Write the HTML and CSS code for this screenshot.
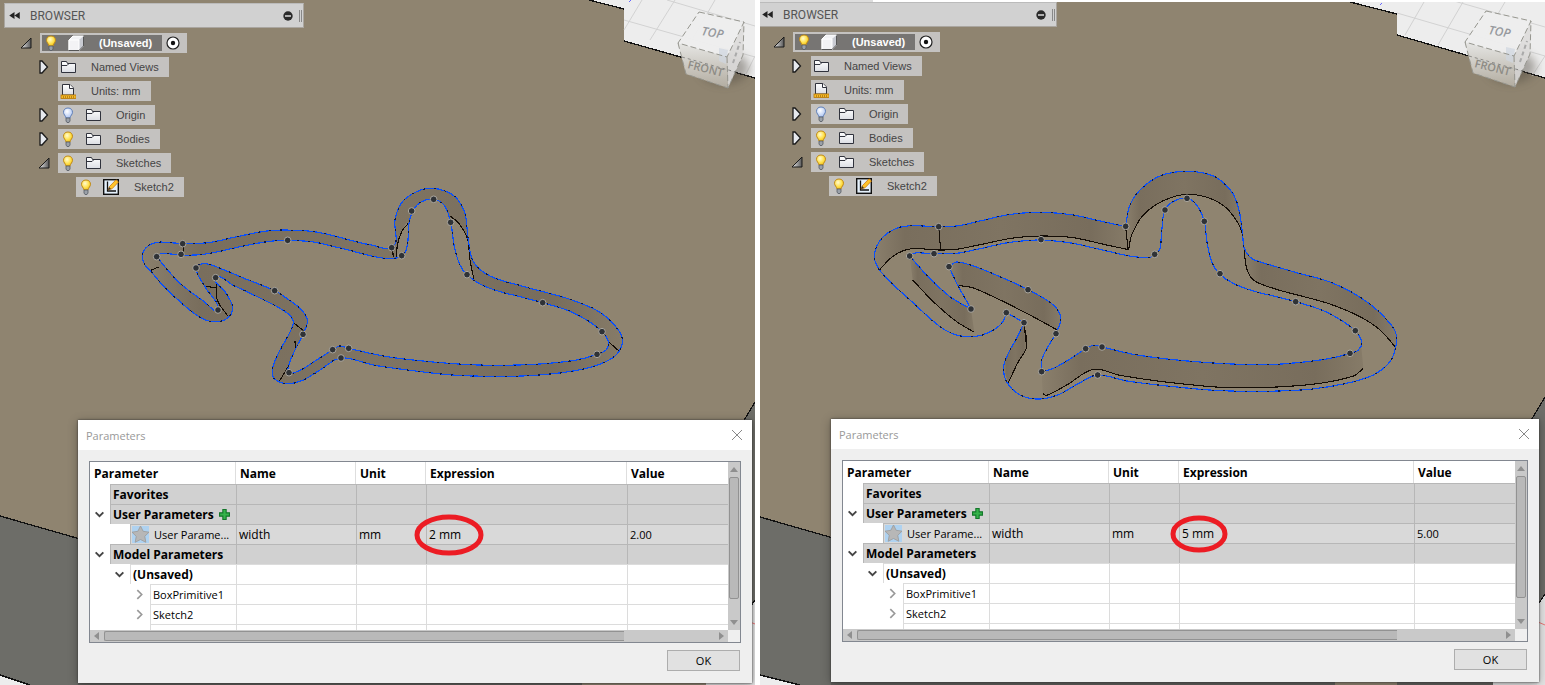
FILE: index.html
```html
<!DOCTYPE html>
<html lang="en">
<head>
<meta charset="utf-8">
<title>Parameters comparison</title>
<link rel="stylesheet" href="styles.css">
</head>
<body>
<svg class="defs" aria-hidden="true">
  <defs>
    <linearGradient id="wall" x1="0" x2="1" y1="0" y2="0">
      <stop offset="0" stop-color="#8a7f6c"/><stop offset=".12" stop-color="#796e5d"/>
      <stop offset=".5" stop-color="#7f7462"/><stop offset=".85" stop-color="#786d5c"/><stop offset="1" stop-color="#867b68"/>
    </linearGradient>
    <linearGradient id="metal" x1="0" x2="1" y1="0" y2="0"><stop offset="0" stop-color="#eee"/><stop offset="1" stop-color="#555"/></linearGradient>
    <linearGradient id="paper" x1="0" x2="0" y1="0" y2="1"><stop offset="0" stop-color="#fff"/><stop offset="1" stop-color="#dcdee4"/></linearGradient>
    <radialGradient id="glow" cx=".4" cy=".35" r=".7"><stop offset="0" stop-color="#fffbd0"/><stop offset=".6" stop-color="#ffe04a"/><stop offset="1" stop-color="#f0b810"/></radialGradient>
    <radialGradient id="dim" cx=".4" cy=".35" r=".7"><stop offset="0" stop-color="#fff"/><stop offset="1" stop-color="#a9c2f2"/></radialGradient>
    <linearGradient id="cubeFace" x1="0" x2="0" y1="0" y2="1"><stop offset="0" stop-color="#e6e6e4"/><stop offset="1" stop-color="#b2aca0"/></linearGradient>
    <filter id="soft" x="-50%" y="-50%" width="200%" height="200%"><feGaussianBlur stdDeviation="5"/></filter>
    <symbol id="i-open" viewBox="0 0 12 12"><path d="M11 1V11H1Z" fill="url(#metal)" stroke="#1a1a1a"/></symbol>
    <symbol id="i-closed" viewBox="0 0 12 14"><path d="M2 1H4L9.500 7L4 13H2Z" fill="#e6e9ee" stroke="#1a1a1a" stroke-width="1.300"/></symbol>
    <symbol id="i-bulb" viewBox="0 0 16 16"><path d="M8 1C5 1 3.500 3 3.500 5.300C3.500 7.500 5.500 8.500 6 11H10C10.500 8.500 12.500 7.500 12.500 5.300C12.500 3 11 1 8 1Z" fill="url(#glow)" stroke="#c08a18"/><path d="M6 11H10V14L9 15.500H7L6 14Z" fill="#9aa0a8" stroke="#565b63" stroke-width=".8"/></symbol>
    <symbol id="i-bulb-off" viewBox="0 0 16 16"><path d="M8 1C5 1 3.500 3 3.500 5.300C3.500 7.500 5.500 8.500 6 11H10C10.500 8.500 12.500 7.500 12.500 5.300C12.500 3 11 1 8 1Z" fill="url(#dim)" stroke="#6080b8"/><path d="M6 11H10V14L9 15.500H7L6 14Z" fill="#9aa0a8" stroke="#565b63" stroke-width=".8"/></symbol>
    <symbol id="i-folder" viewBox="0 0 16 16"><path d="M1.500 13.500V2.500H6.500L7.500 4.500H15.500V13.500Z" fill="url(#paper)" stroke="#30323c"/><path d="M2 6.500H7L8.500 5" fill="none" stroke="#30323c"/></symbol>
    <symbol id="i-units" viewBox="0 0 16 16"><path d="M2.500 12V1.500H10L13.500 5V12Z" fill="url(#paper)" stroke="#30323c"/><path d="M9.500 1.500V5.500H13.500" fill="#fff" stroke="#30323c"/><rect x="1" y="12" width="15" height="3.500" fill="#f5ba2b" stroke="#b87800" stroke-width=".8"/><path d="M3 14H15" stroke="#805000" stroke-dasharray="1 1"/></symbol>
    <symbol id="i-box" viewBox="0 0 16 16"><path d="M1 5L5 1H15.500V11L11 15.500H1Z" fill="#f3f3f5" stroke="#fff"/><path d="M11 5L15.500 1V11L11 15.500Z" fill="#c9cbd2"/><path d="M1 15.500V5L5 1M11 15.500V5H1" fill="none" stroke="#fff"/><path d="M.5 15.500H11L15.500 11V1.500" fill="none" stroke="#555"/></symbol>
    <symbol id="i-sketch" viewBox="0 0 16 16"><rect x=".7" y=".7" width="14.600" height="14.600" fill="#e5f1fc" stroke="#111" stroke-width="1.400"/><path d="M4.500 2.500V12H13" fill="none" stroke="#111" stroke-width="1.300"/><path d="M5 11L6.500 7.500L13 .8L15.500 3L9 9.800Z" fill="#ffc42b" stroke="#c76d00" stroke-width=".7"/><path d="M5 11L6 8L8 10Z" fill="#333"/></symbol>
    <symbol id="i-rewind" viewBox="0 0 12 8"><path d="M6 0V8L0 4ZM12 0V8L6 4Z" fill="#222"/></symbol>
    <symbol id="i-minus" viewBox="0 0 10 10"><circle cx="5" cy="5" r="4.700" fill="#2b2b2b"/><path d="M2 5H8" stroke="#ddd" stroke-width="1.500"/></symbol>
    <symbol id="i-target" viewBox="0 0 14 14"><circle cx="7" cy="7" r="6" fill="#fff" stroke="#222" stroke-width="1.200"/><circle cx="7" cy="7" r="2.200" fill="#111"/></symbol>
    <symbol id="i-close" viewBox="0 0 12 12"><path d="M1 1L11 11M11 1L1 11" stroke="#888" fill="none"/></symbol>
    <symbol id="i-down" viewBox="0 0 10 10"><path d="M1.500 3L5 6.500L8.500 3" fill="none" stroke="#444" stroke-width="1.700"/></symbol>
    <symbol id="i-right" viewBox="0 0 10 10"><path d="M3 1L7 5L3 9" fill="none" stroke="#999" stroke-width="1.500"/></symbol>
    <symbol id="i-plus" viewBox="0 0 10 10"><path d="M3.500 .5H6.500V3.500H9.500V6.500H6.500V9.500H3.500V6.500H.5V3.500H3.500Z" fill="#35b34a" stroke="#13762a"/></symbol>
    <symbol id="i-star" viewBox="0 0 16 16"><rect width="16" height="16" fill="#afd2f0"/><path d="M8 0L10.500 5L16 5.800L12 9.700L13 15.300L8 12.700L3 15.300L4 9.700L0 5.800L5.500 5Z" fill="#b7b7b7" stroke="#9c9c9c" stroke-width=".8"/></symbol>
    <g id="viewcube">
      <ellipse cx="724" cy="68" rx="25" ry="16" fill="#4d473d" opacity=".45" filter="url(#soft)"/>
      <path d="M678 43L727 57L728 88L686 74Z" fill="url(#cubeFace)"/>
      <path d="M727 57L744 22L743 55L728 88Z" fill="#dddcda" opacity=".9"/>
      <path d="M699 12L744 22L727 57L678 43Z" fill="#eeeeee" opacity=".95"/>
      <path d="M719 48L728 50L726 64L719 61Z" fill="#cfd5df" opacity=".7"/>
      <path d="M699 12L744 22L727 57L678 43ZM727 57L728 88L743 55L744 22M678 43L686 74L728 88" fill="none" stroke="#96968f" stroke-dasharray="6 3"/>
      <path d="M682 57L743 74" stroke="#222" stroke-dasharray="3 3" opacity=".4"/>
      <text class="cube-top" x="701" y="35" transform="rotate(10 701 35)">TOP</text>
      <text class="cube-front" x="687" y="68" transform="rotate(14 687 68)">FRONT</text>
      <path d="M733 63L740 42" stroke="#aaa" stroke-width="2" stroke-dasharray="4 3"/>
    </g>
  </defs>
</svg>

<main class="compare">
  <section class="pane pane--narrow" aria-label="Width 2 mm">
    <svg class="scene" viewBox="0 0 755 685" preserveAspectRatio="none" aria-hidden="true">
      <rect width="755" height="685" fill="#8f8470"/>
      <path d="M0 516L80 539V685H0Z" fill="#6d6d68"/><path d="M0 516L80 539" class="edge"/>
      <path d="M0 675L30 685H0Z" fill="#ededed"/><path d="M0 675L30 685" class="edge"/>
      <path d="M78 680H582V685H78Z" fill="#5f5f5b"/><path d="M706 680H755V685H706Z" fill="#ddd"/>
      <path d="M755 402L740 427V620H755Z" fill="#6d6d68"/><path d="M755 402L740 427" class="edge"/>
      <path d="M750 607L755 600V685H750Z" fill="#e4e4e4"/><path d="M750 607L755 600" class="edge"/><path d="M750 622L755 624" stroke="#e77"/>
      <path d="M590 0L624 9V41L755 78V0Z" fill="#ededed"/>
      <path d="M667 0L755 26M624 20L755 57M675 0L650 40M715 0L693 38M642 0L624 30M755 56L745 76" class="grid-line"/>
      <path d="M589 0L624 9M624 41L755 78" class="edge"/><path d="M631 0L629 2" stroke="#66f"/>
      <use href="#viewcube"/>
      <g class="part" data-part="narrow" transform="translate(120 170) scale(.33333)"></g>
    </svg>

    <aside class="browser">
      <header class="browser-bar">
        <button class="plain" aria-label="Collapse"><svg width="11" height="7"><use href="#i-rewind"/></svg></button>
        <h2>BROWSER</h2>
        <button class="plain push" aria-label="Hide"><svg width="10" height="10"><use href="#i-minus"/></svg></button>
        <i class="grip"></i>
      </header>
      <ul class="tree">
        <li class="lv1"><button class="toggle" aria-label="Collapse document"><svg width="12" height="12"><use href="#i-open"/></svg></button><span class="chip chip--root"><span class="root-name"><svg><use href="#i-bulb"/></svg><svg><use href="#i-box"/></svg><b>(Unsaved)</b></span><svg class="target"><use href="#i-target"/></svg></span></li>
        <li class="lv2"><button class="toggle" aria-label="Expand Named Views"><svg width="12" height="14"><use href="#i-closed"/></svg></button><span class="chip"><svg><use href="#i-folder"/></svg><span>Named Views</span></span></li>
        <li class="lv2"><span class="toggle"></span><span class="chip"><svg><use href="#i-units"/></svg><span>Units: mm</span></span></li>
        <li class="lv2"><button class="toggle" aria-label="Expand Origin"><svg width="12" height="14"><use href="#i-closed"/></svg></button><span class="chip"><svg><use href="#i-bulb-off"/></svg><svg><use href="#i-folder"/></svg><span>Origin</span></span></li>
        <li class="lv2"><button class="toggle" aria-label="Expand Bodies"><svg width="12" height="14"><use href="#i-closed"/></svg></button><span class="chip"><svg><use href="#i-bulb"/></svg><svg><use href="#i-folder"/></svg><span>Bodies</span></span></li>
        <li class="lv2"><button class="toggle" aria-label="Collapse Sketches"><svg width="12" height="12"><use href="#i-open"/></svg></button><span class="chip"><svg><use href="#i-bulb"/></svg><svg><use href="#i-folder"/></svg><span>Sketches</span></span></li>
        <li class="lv3"><span class="toggle"></span><span class="chip"><svg><use href="#i-bulb"/></svg><svg><use href="#i-sketch"/></svg><span>Sketch2</span></span></li>
      </ul>
    </aside>

    <div class="dialog" role="dialog" aria-label="Parameters">
      <header class="dialog-title"><h2>Parameters</h2><button class="plain" aria-label="Close"><svg width="12" height="12"><use href="#i-close"/></svg></button></header>
      <div class="dialog-body">
        <div class="frame">
          <div class="viewport">
            <table>
              <colgroup><col class="c-param"><col class="c-name"><col class="c-unit"><col><col class="c-value"></colgroup>
              <thead><tr><th>Parameter</th><th>Name</th><th>Unit</th><th>Expression</th><th>Value</th></tr></thead>
              <tbody>
                <tr class="group"><td><div class="node n1"><i></i><b>Favorites</b></div></td><td></td><td></td><td></td><td></td></tr>
                <tr class="group"><td><div class="node n1"><i><svg><use href="#i-down"/></svg></i><b>User Parameters<button class="plain add" aria-label="Add user parameter"><svg><use href="#i-plus"/></svg></button></b></div></td><td></td><td></td><td></td><td></td></tr>
                <tr class="group entry"><td><div class="node n2"><i></i><span><svg class="star"><use href="#i-star"/></svg>User Parame...</span></div></td><td>width</td><td>mm</td><td><span class="marked">2 mm<svg class="ring" width="70" height="42" viewBox="0 0 70 42"><ellipse cx="35" cy="21" rx="32" ry="18"/></svg></span></td><td>2.00</td></tr>
                <tr class="group"><td><div class="node n1"><i><svg><use href="#i-down"/></svg></i><b>Model Parameters</b></div></td><td></td><td></td><td></td><td></td></tr>
                <tr><td><div class="node n2"><i><svg><use href="#i-down"/></svg></i><b>(Unsaved)</b></div></td><td></td><td></td><td></td><td></td></tr>
                <tr><td><div class="node n3"><i><svg><use href="#i-right"/></svg></i><span>BoxPrimitive1</span></div></td><td></td><td></td><td></td><td></td></tr>
                <tr><td><div class="node n3"><i><svg><use href="#i-right"/></svg></i><span>Sketch2</span></div></td><td></td><td></td><td></td><td></td></tr>
                <tr><td><div class="node n3"><i></i><span></span></div></td><td></td><td></td><td></td><td></td></tr>
              </tbody>
            </table>
          </div>
          <div class="vbar"><i class="up"></i><i class="thumb"></i><i class="down"></i></div>
          <div class="hbar"><i class="left"></i><i class="thumb"></i><i class="right"></i></div>
        </div>
        <button class="ok">OK</button>
      </div>
    </div>
  </section>

  <section class="pane pane--wide" aria-label="Width 5 mm">
    <svg class="scene" viewBox="760 0 785 685" preserveAspectRatio="none" aria-hidden="true">
      <rect x="760" width="785" height="685" fill="#8f8470"/>
      <path d="M760 517L840 540V685H760Z" fill="#6d6d68"/><path d="M760 517L840 540" class="edge"/>
      <path d="M760 675L800 685H760Z" fill="#ededed"/><path d="M760 675L800 685" class="edge"/>
      <path d="M831 680H1335V685H831ZM1397 680H1493V685H1397Z" fill="#5f5f5b"/><path d="M1493 680H1545V685H1493Z" fill="#ddd"/>
      <path d="M1545 397L1527 427V620H1545Z" fill="#6d6d68"/><path d="M1545 397L1527 427" class="edge"/>
      <path d="M1537 606L1545 594V685H1537Z" fill="#e4e4e4"/><path d="M1537 606L1545 594" class="edge"/><path d="M1538 622L1545 625" stroke="#e77"/>
      <path d="M1350 2L1397 14V35L1545 78V0H1350Z" fill="#ededed"/>
      <path d="M1454 1L1545 27M1397 13L1545 56M1424 2L1405 35M1463 2L1438 45M1505 2L1485 36M1545 56L1532 76" class="grid-line"/>
      <path d="M1350 2L1397 14M1397 35L1545 78" class="edge"/><path d="M1382 3L1380 5" stroke="#66f"/>
      <use href="#viewcube" x="787" y="-1"/>
      <rect x="760" width="785" height="2" fill="#fff"/><rect x="760" width="113" height="2" fill="#ddd"/>
      <g class="part" data-part="wide" transform="translate(860 160) scale(.33333)"></g>
    </svg>

    <aside class="browser">
      <header class="browser-bar">
        <button class="plain" aria-label="Collapse"><svg width="11" height="7"><use href="#i-rewind"/></svg></button>
        <h2>BROWSER</h2>
        <button class="plain push" aria-label="Hide"><svg width="10" height="10"><use href="#i-minus"/></svg></button>
        <i class="grip"></i>
      </header>
      <ul class="tree">
        <li class="lv1"><button class="toggle" aria-label="Collapse document"><svg width="12" height="12"><use href="#i-open"/></svg></button><span class="chip chip--root"><span class="root-name"><svg><use href="#i-bulb"/></svg><svg><use href="#i-box"/></svg><b>(Unsaved)</b></span><svg class="target"><use href="#i-target"/></svg></span></li>
        <li class="lv2"><button class="toggle" aria-label="Expand Named Views"><svg width="12" height="14"><use href="#i-closed"/></svg></button><span class="chip"><svg><use href="#i-folder"/></svg><span>Named Views</span></span></li>
        <li class="lv2"><span class="toggle"></span><span class="chip"><svg><use href="#i-units"/></svg><span>Units: mm</span></span></li>
        <li class="lv2"><button class="toggle" aria-label="Expand Origin"><svg width="12" height="14"><use href="#i-closed"/></svg></button><span class="chip"><svg><use href="#i-bulb-off"/></svg><svg><use href="#i-folder"/></svg><span>Origin</span></span></li>
        <li class="lv2"><button class="toggle" aria-label="Expand Bodies"><svg width="12" height="14"><use href="#i-closed"/></svg></button><span class="chip"><svg><use href="#i-bulb"/></svg><svg><use href="#i-folder"/></svg><span>Bodies</span></span></li>
        <li class="lv2"><button class="toggle" aria-label="Collapse Sketches"><svg width="12" height="12"><use href="#i-open"/></svg></button><span class="chip"><svg><use href="#i-bulb"/></svg><svg><use href="#i-folder"/></svg><span>Sketches</span></span></li>
        <li class="lv3"><span class="toggle"></span><span class="chip"><svg><use href="#i-bulb"/></svg><svg><use href="#i-sketch"/></svg><span>Sketch2</span></span></li>
      </ul>
    </aside>

    <div class="dialog" role="dialog" aria-label="Parameters">
      <header class="dialog-title"><h2>Parameters</h2><button class="plain" aria-label="Close"><svg width="12" height="12"><use href="#i-close"/></svg></button></header>
      <div class="dialog-body">
        <div class="frame">
          <div class="viewport">
            <table>
              <colgroup><col class="c-param"><col class="c-name"><col class="c-unit"><col><col class="c-value"></colgroup>
              <thead><tr><th>Parameter</th><th>Name</th><th>Unit</th><th>Expression</th><th>Value</th></tr></thead>
              <tbody>
                <tr class="group"><td><div class="node n1"><i></i><b>Favorites</b></div></td><td></td><td></td><td></td><td></td></tr>
                <tr class="group"><td><div class="node n1"><i><svg><use href="#i-down"/></svg></i><b>User Parameters<button class="plain add" aria-label="Add user parameter"><svg><use href="#i-plus"/></svg></button></b></div></td><td></td><td></td><td></td><td></td></tr>
                <tr class="group entry"><td><div class="node n2"><i></i><span><svg class="star"><use href="#i-star"/></svg>User Parame...</span></div></td><td>width</td><td>mm</td><td><span class="marked">5 mm<svg class="ring" width="58" height="38" viewBox="0 0 58 38"><ellipse cx="29" cy="19" rx="26" ry="16"/></svg></span></td><td>5.00</td></tr>
                <tr class="group"><td><div class="node n1"><i><svg><use href="#i-down"/></svg></i><b>Model Parameters</b></div></td><td></td><td></td><td></td><td></td></tr>
                <tr><td><div class="node n2"><i><svg><use href="#i-down"/></svg></i><b>(Unsaved)</b></div></td><td></td><td></td><td></td><td></td></tr>
                <tr><td><div class="node n3"><i><svg><use href="#i-right"/></svg></i><span>BoxPrimitive1</span></div></td><td></td><td></td><td></td><td></td></tr>
                <tr><td><div class="node n3"><i><svg><use href="#i-right"/></svg></i><span>Sketch2</span></div></td><td></td><td></td><td></td><td></td></tr>
                <tr><td><div class="node n3"><i></i><span></span></div></td><td></td><td></td><td></td><td></td></tr>
              </tbody>
            </table>
          </div>
          <div class="vbar"><i class="up"></i><i class="thumb"></i><i class="down"></i></div>
          <div class="hbar"><i class="left"></i><i class="thumb"></i><i class="right"></i></div>
        </div>
        <button class="ok">OK</button>
      </div>
    </div>
  </section>
</main>
<script src="scene.js"></script>
</body>
</html>
```

FILE: styles.css
```css
* { box-sizing: border-box; }
body { margin: 0; background: #fff; font-family: "Liberation Sans", Arial, sans-serif; font-size: 11px; }
h2, ul { margin: 0; padding: 0; font-weight: normal; list-style: none; }
svg { display: block; flex: none; }
.defs { position: absolute; width: 0; height: 0; }
.plain { border: 0; padding: 0; background: none; }

.compare { display: grid; grid-template-columns: 755fr 785fr; column-gap: 5px; min-height: 100vh; }
.pane { position: relative; display: flex; flex-direction: column; min-width: 0; overflow: hidden; }
.scene { position: absolute; inset: 0; width: 100%; height: 100%; }
.edge { fill: none; stroke: #111; stroke-width: 1.3; shape-rendering: crispEdges; }
.grid-line { fill: none; stroke: #d2d2d2; }
.cube-top, .cube-front { font-family: "Open Sans", sans-serif; font-weight: 600; font-style: italic; fill: #96999d; font-size: 12px; }
.cube-front { fill: #8d8b85; font-size: 11px; font-style: normal; }

.rim, .rim-dark, .crease { fill: none; vector-effect: non-scaling-stroke; shape-rendering: crispEdges; }
.rim { stroke: #0b50fa; stroke-width: 1.2; }
.rim-dark { stroke: #0b1a4a; stroke-width: 1.2; stroke-dasharray: 2 9; }
.crease { stroke: #140d06; stroke-width: 1.1; }
.knot { fill: #2f3236; stroke: #aaa69e; stroke-width: 3; }

.browser { position: relative; width: 300px; margin: 3px 0 0 4px; }
.pane--wide .browser { margin: 2px 0 0 -3px; }
.browser-bar { display: flex; align-items: center; height: 25px; padding: 0 1px 0 4px; background: #d1d1d1; border: 1px solid #aaa6a0; border-top-color: #bbb; }
.browser-bar h2 { margin-left: 10px; font: 12px Roboto, sans-serif; color: #555; }
.push { margin-left: auto; margin-right: 6px; }
.grip { width: 3px; height: 12px; border: solid #888; border-width: 0 1px; }

.tree { display: grid; gap: 4px; margin-top: 5px; color: #444; }
.tree li { display: flex; height: 20px; }
.lv1 { padding-left: 16px; }
.lv2 { padding-left: 34px; }
.lv3 { padding-left: 52px; }
.toggle { display: flex; align-items: center; width: 20px; flex: none; padding: 0; border: 0; background: none; }
.chip { display: flex; align-items: center; padding: 0 10px 0 2px; background: #c4c2c0; }
.chip svg { width: 16px; height: 16px; margin-right: 9px; }
.chip svg + span, .chip svg + b { margin-left: 6px; }
.chip--root { padding: 2px 7px 2px 2px; }
.root-name { display: flex; align-items: center; height: 16px; padding: 0 10px 0 1px; background: #777573; color: #fff; }
.chip .target { width: 14px; height: 14px; margin: 0 0 0 4px; }

.dialog { position: relative; margin: auto 3px 2px 78px; background: #efefef; color: #000; font-family: "Open Sans", "Noto Sans", sans-serif; font-size: 12px; box-shadow: 0 0 2px #333, 0 2px 10px rgba(0, 0, 0, .3); }
.pane--wide .dialog { margin: auto 6px 3px 71px; }
.dialog-title { display: flex; align-items: center; justify-content: space-between; height: 30px; padding: 0 9px 0 8px; background: #fff; }
.dialog-title h2 { font-size: 11px; color: #999; }
.dialog-body { display: flex; flex-direction: column; padding: 11px 11px 12px; }
.frame { display: grid; grid-template: 168px 12px / minmax(0, 1fr) 12px; border: 1px solid #828790; }
.viewport { overflow: hidden; background: #fff; }
table { width: 100%; table-layout: fixed; border-spacing: 0; line-height: 16px; }
.c-param { width: 146px; }
.c-name { width: 120px; }
.c-unit { width: 70px; }
.c-value { width: 101px; }
th { height: 22px; padding: 2px 4px 0; text-align: left; font-size: 12px; font-weight: 700; border-right: 1px solid #dedede; }
th:last-child { border-right: 0; }
td { height: 20px; padding: 1px 2px 0; border: solid #dcdcdc; border-width: 1px 0 0 1px; white-space: nowrap; }
td:first-child { padding: 0; border: 0; }
td:last-child { font-size: 11px; }
.group td, .group .node > :last-child { background: #d1d1d1; border-color: #b7b7b7; }
.entry td, .group.entry .node > :last-child { background: #d9d9d9; }
.group td:first-child { background: #fff; }
.node { display: flex; height: 20px; }
.node > i { display: flex; align-items: center; width: 20px; padding-left: 4px; }
.node > i svg { width: 11px; height: 11px; }
.node > :last-child { display: flex; align-items: center; flex: 1; min-width: 0; padding: 1px 0 0 2px; border: solid #dcdcdc; border-width: 1px 0 0 1px; }
.node > span { font-size: 11px; }
.n2 { padding-left: 20px; }
.n3 { padding-left: 40px; }
.node .star { width: 17px; height: 17px; margin: -2px 5px 0 -1px; }
.add { margin: -2px 0 0 5px; }
.add svg { width: 11px; height: 11px; }
.marked { position: relative; padding-right: 7px; }
.pane--wide .marked { padding-right: 2px; }
.ring { position: absolute; left: 50%; top: 50%; transform: translate(-50%, -50%); fill: none; stroke: #ec1c24; stroke-width: 5; }

.vbar, .hbar { display: flex; align-items: center; background: #c9c9c9; }
.vbar { flex-direction: column; justify-content: space-between; padding: 5px 0; }
.vbar .thumb { width: 10px; height: 122px; margin: 5px 0 auto; background: #b9b9b9; border: 1px solid #929292; border-radius: 2px; }
.hbar { padding: 0 4px; }
.hbar .thumb { flex: 1; height: 10px; margin: 0 95px 0 5px; background: #b9b9b9; border: solid #929292; border-width: 1px 0 1px 1px; border-radius: 2px 0 0 2px; }
.pane--wide .hbar .thumb { margin-right: 109px; }
.up, .down, .left, .right { width: 0; height: 0; border: 4px solid transparent; }
.up { border-top: 0; border-bottom: 5px solid #8f8f8f; }
.down { border-bottom: 0; border-top: 5px solid #8f8f8f; }
.left { border-left: 0; border-right: 5px solid #8f8f8f; }
.right { border-right: 0; border-left: 5px solid #8f8f8f; }
.ok { align-self: flex-end; width: 73px; height: 21px; margin: 7px 1px 0 0; padding: 0; border: 1px solid #adadad; background: #e1e1e1; font: inherit; font-size: 11px; }
```

FILE: scene.js
```js
// Each curve is a flat list of x,y pairs; a smooth spline runs through them.
const parts = {
  narrow: {
    bands: [{
      outer: [188,221,150,218,115,217,85,227,67,256,75,285,95,307,130,348,180,395,225,432,260,451,295,455,325,442,338,420,335,400,315,365,287,323,340,346,440,394,500,428,520,455,508,490,475,550,457,600,465,628,505,641,550,630,600,600,663,564,760,585,870,601,1010,616,1150,619,1270,614,1400,595,1480,562,1507,520,1495,480,1440,427,1350,388,1220,352,1110,318,1060,275,1045,210,1035,130,1010,85,975,63,935,55,890,65,845,98,825,150,820,230,750,224,700,213,620,192,550,182,450,182,350,200,265,218,188,221],
      inner: [110,260,125,250,183,255,250,253,330,237,400,222,460,213,503,211,580,216,660,234,780,263,830,264,852,253,863,220,867,160,880,120,905,95,941,88,972,105,992,157,1003,230,1020,285,1041,314,1080,342,1140,365,1200,380,1268,398,1340,420,1400,450,1446,485,1465,515,1458,540,1431,553,1370,570,1260,582,1130,586,1000,581,870,569,780,556,686,535,660,528,638,539,590,570,545,598,507,608,510,575,530,530,549,493,562,450,540,415,500,385,464,362,380,328,300,295,255,281,228,294,255,350,294,420,250,393,180,340,130,285,110,260]
    }],
    floors: [
      [992,157,1003,230,1020,285,1041,314,1060,325,1050,270,1042,205,1015,158,992,145],
      [830,262,832,225,845,185,865,160,862,220,852,253]
    ],
    walls: [],
    rims: [],
    creases: [[90,302,115,291],[253,348,290,354],[289,335,292,390,325,440],[520,458,553,484],[525,512,526,540],[478,633,505,590],[830,262,832,225,845,185,865,160],[818,240,820,262],[990,138,1015,158,1042,205,1050,270,1062,328],[1466,516,1498,544],[190,225,190,250]],
    knots: [188,221,183,253,110,260,228,294,287,323,294,420,464,362,549,493,507,608,638,539,686,535,663,564,503,211,815,233,845,257,875,123,941,88,992,157,1041,314,1268,398,1446,485,1431,553]
  },
  wide: {
    bands: [],
    floors: [],
    walls: [
      [[58,330,44,300,46,270,70,230,110,205,150,197,236,200,290,198,360,183,440,165,535,157,640,165,720,183,798,200],[806,269,740,255,640,233,545,228,460,234,370,252,290,268,240,270,150,267,100,288,58,330]],
      [[797,199,808,140,840,90,900,48,980,34,1060,48,1115,95,1137,150,1148,225],[1148,225,1135,190,1100,145,1050,115,980,103,910,122,850,165,815,225,806,269]],
      [[1148,225,1153,265,1175,295,1220,312,1310,338,1420,370,1520,425,1590,490,1609,525,1607,562],[1607,562,1560,510,1500,470,1410,432,1320,407,1240,385,1180,360,1160,325,1152,262,1148,225]],
      [[149,288,200,345,270,410,333,447],[343,517,290,485,220,425,158,360]],
      [[295,376,267,320,290,306,340,318,420,350,504,389,580,435,602,475,592,510],[592,510,500,460,400,410,340,384,295,376]],
      [[445,668,431,620,445,580,470,535,492,488],[492,492,500,560,475,605,445,668]],
      [[545,635,580,625,630,597,677,566,700,556,726,561,820,583,920,597,1060,609,1200,614,1290,610,1400,597,1470,580,1495,570,1503,550],[1510,625,1480,648,1380,670,1250,681,1100,683,900,664,780,646,700,628,620,675,560,706,548,700]]
    ],
    rims: [
      [58,330,44,300,46,270,70,230,110,205,150,197,236,200,290,198,360,183,440,165,535,157,640,165,720,183,798,200],
      [797,199,808,140,840,90,900,48,980,34,1060,48,1115,95,1137,150,1148,225,1153,265,1175,295,1220,312,1310,338,1420,370,1520,425,1590,490,1609,525,1607,562,1590,605,1540,645,1460,670,1350,688,1220,694,1080,692,940,680,800,663,713,645,660,668,600,702,540,717,480,705,440,665,431,620,445,580,470,535,492,488],
      [492,488,440,458],
      [440,458,425,490,385,518,340,530,290,525,240,500,150,420,90,365,58,330],
      [149,288,165,279,222,281,290,280,370,264,450,247,543,240,640,250,740,273,820,290,870,292,888,283,900,265,905,215,915,150,945,122,981,115,1010,135,1033,184,1040,240,1055,305,1079,342,1120,370,1180,393,1240,408,1307,425,1390,452,1450,485,1485,512,1505,545,1495,570,1470,580,1400,597,1290,610,1200,614,1060,609,920,597,820,583,726,561,700,556,677,566,630,597,580,625,545,635],
      [545,635,545,600,570,550,588,521,602,475,580,435,504,389,420,350,340,318,290,306,267,320],
      [267,320,290,370,333,447],
      [333,447,270,410,200,345,149,288]
    ],
    creases: [[236,200,242,270],[797,199,804,269],[492,490,500,560]],
    knots: [236,200,543,239,222,281,149,288,267,320,333,447,439,458,492,488,504,389,588,521,545,635,677,566,726,561,713,645,797,199,915,150,981,115,1033,184,884,283,1080,341,1307,425,1486,512,1470,580]
  }
};

function curve(flat, start) {
  const p = [];
  for (let i = 0; i < flat.length; i += 2) p.push([flat[i], flat[i + 1]]);
  let d = (start || "M") + p[0].join(" ");
  for (let i = 0; i < p.length - 1; i++) {
    const a = p[i - 1] || p[i], b = p[i], c = p[i + 1], e = p[i + 2] || c;
    const reach = Math.hypot(c[0] - b[0], c[1] - b[1]) / 3;
    const before = Math.hypot(c[0] - a[0], c[1] - a[1]) || 1;
    const after = Math.hypot(e[0] - b[0], e[1] - b[1]) || 1;
    d += "C" + [b[0] + (c[0] - a[0]) / before * reach, b[1] + (c[1] - a[1]) / before * reach,
      c[0] - (e[0] - b[0]) / after * reach, c[1] - (e[1] - b[1]) / after * reach, c[0], c[1]].map(Math.round).join(" ");
  }
  return d;
}

function add(g, name, attrs) {
  const el = document.createElementNS("http://www.w3.org/2000/svg", name);
  for (const key in attrs) el.setAttribute(key, attrs[key]);
  g.appendChild(el);
}

document.querySelectorAll(".part").forEach(g => {
  const part = parts[g.dataset.part];
  const rims = part.rims.slice();
  part.bands.forEach(b => {
    add(g, "path", { d: curve(b.outer) + "Z" + curve(b.inner) + "Z", fill: "url(#wall)", "fill-rule": "evenodd" });
    rims.push(b.outer, b.inner);
  });
  part.walls.forEach(w => {
    add(g, "path", { d: curve(w[0]) + curve(w[1], "L") + "Z", fill: "url(#wall)" });
    add(g, "path", { d: curve(w[1]), class: "crease" });
  });
  part.floors.forEach(f => add(g, "path", { d: curve(f) + "Z", fill: "#8f8470" }));
  part.creases.forEach(c => add(g, "path", { d: curve(c), class: "crease" }));
  rims.forEach(r => {
    add(g, "path", { d: curve(r), class: "rim" });
    add(g, "path", { d: curve(r), class: "rim-dark" });
  });
  for (let i = 0; i < part.knots.length; i += 2)
    add(g, "circle", { cx: part.knots[i], cy: part.knots[i + 1], r: 10, class: "knot" });
});
```
